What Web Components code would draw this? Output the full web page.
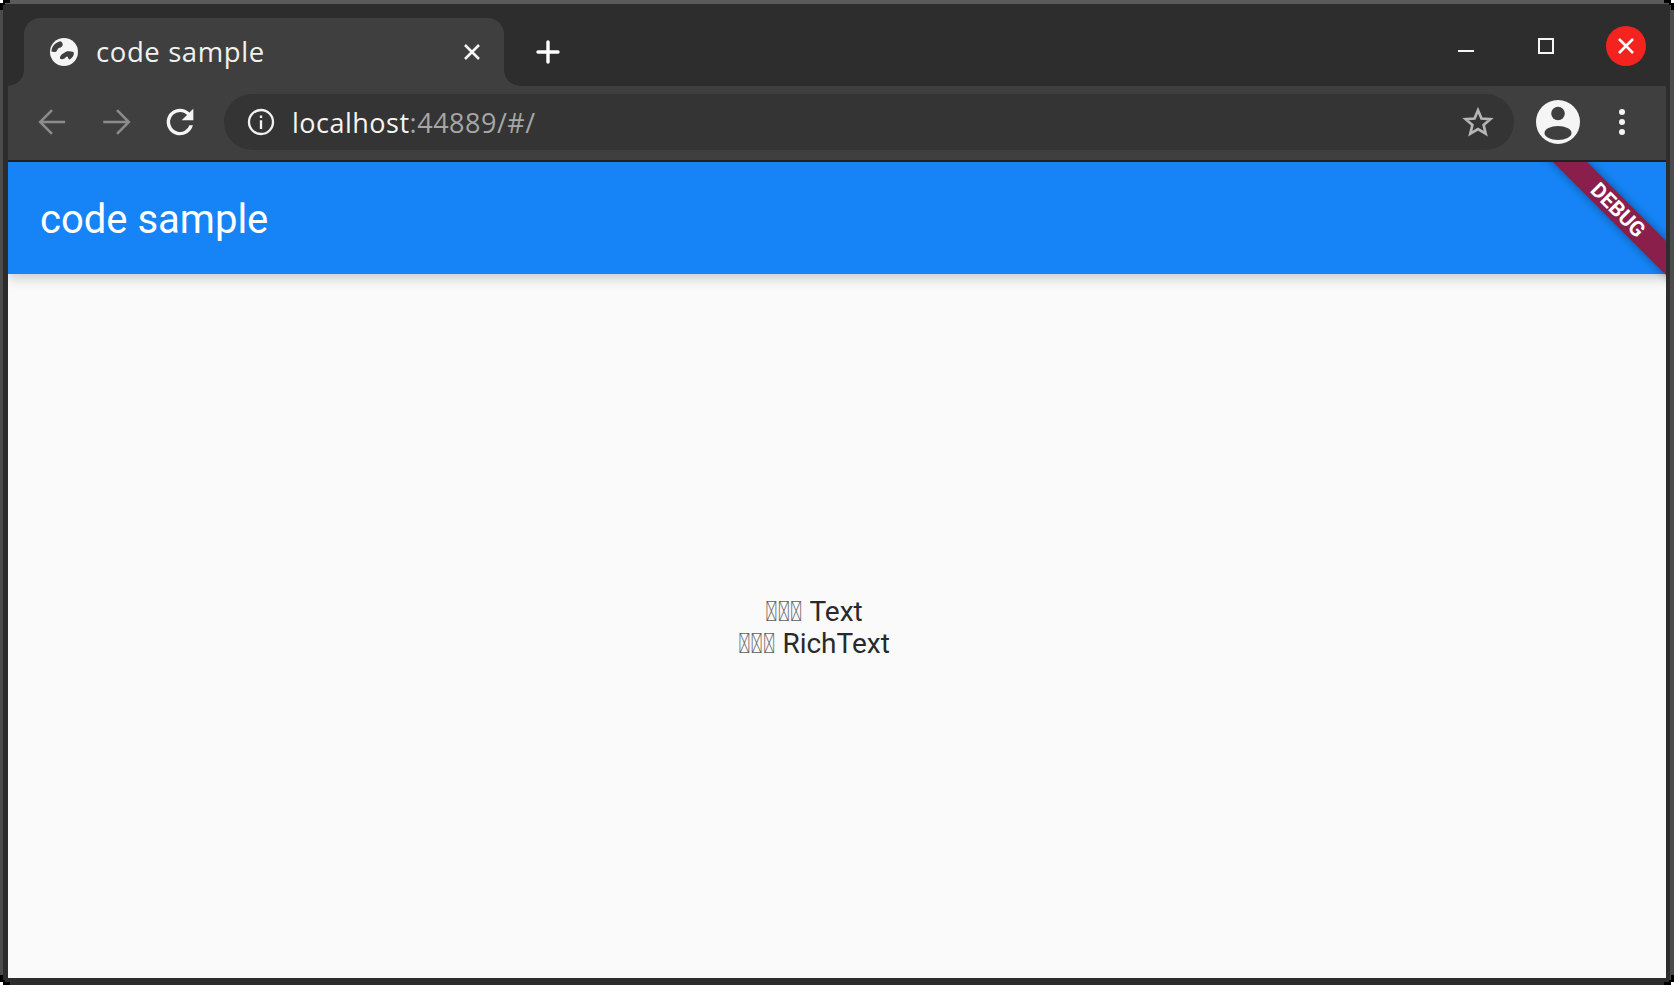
<!DOCTYPE html>
<html>
<head>
<meta charset="utf-8">
<title>code sample</title>
<style>
  html, body { margin: 0; padding: 0; height: 100%; background: #fff; overflow: hidden; }
</style>
</head>
<body>
<browser-window>
  <browser-tabs slot="tabs" title-text="code sample"></browser-tabs>
  <browser-toolbar slot="toolbar"></browser-toolbar>
  <flutter-page page-title="code sample">
    <center-lines></center-lines>
  </flutter-page>
</browser-window>

<script>
class BrowserWindow extends HTMLElement {
    constructor() {
        super();
        this.attachShadow({ mode: 'open' });
    }

    connectedCallback() {
        this.shadowRoot.innerHTML = `
            <style>
                :host {
                    display: flex;
                    flex-direction: column;
                    width: 1674px;
                    height: 985px;
                    box-sizing: border-box;
                    position: relative;
                    background: #2d2d2d;
                    padding: 4px 8px 7px 8px;
                    box-shadow: inset 0 4px 0 #5a5a5a, inset 3px 0 0 #4c4c4c, inset -4px 0 0 #4c4c4c;
                }
                .corner { position: absolute; width: 10px; height: 10px; }
                .corner i { position: absolute; background: #000; }
                .tl { left: 0; top: 0; }
                .tr { right: 0; top: 0; transform: scaleX(-1); }
                .bl { left: 0; bottom: 0; transform: scaleY(-1); }
                .br { right: 0; bottom: 0; transform: scale(-1, -1); }
                .corner b { position: absolute; left: 0; top: 0; width: 3px; height: 3px; background: #fff; }
                .corner i.a { left: 0; top: 3px; width: 3px; height: 7px; }
                .corner i.b { left: 3px; top: 0; width: 7px; height: 3px; }
                .corner i.c { left: 3px; top: 3px; width: 2px; height: 2px; }
            </style>
            <slot name="tabs"></slot>
            <slot name="toolbar"></slot>
            <slot></slot>
            <div class="corner tl"><b></b><i class="a"></i><i class="b"></i><i class="c"></i></div>
            <div class="corner tr"><b></b><i class="a"></i><i class="b"></i><i class="c"></i></div>
            <div class="corner bl"><b></b><i class="a"></i><i class="b"></i><i class="c"></i></div>
            <div class="corner br"><b></b><i class="a"></i><i class="b"></i><i class="c"></i></div>
        `;
    }
}

class BrowserTabs extends HTMLElement {
    constructor() {
        super();
        this.attachShadow({ mode: 'open' });
    }

    connectedCallback() {
        const title = this.getAttribute('title-text') || '';
        this.shadowRoot.innerHTML = `
            <style>
                :host {
                    display: flex;
                    align-items: flex-end;
                    height: 82px;
                    flex: none;
                    color: #fff;
                    font-family: 'Open Sans', 'Noto Sans', sans-serif;
                }
                .tab {
                    position: relative;
                    display: flex;
                    align-items: center;
                    width: 480px;
                    height: 68px;
                    margin-left: 16px;
                    box-sizing: border-box;
                    padding: 0 23px 0 26px;
                    background: #3f3f3f;
                    border-radius: 16px 16px 0 0;
                }
                .tab::before, .tab::after {
                    content: '';
                    position: absolute;
                    bottom: 0;
                    width: 16px;
                    height: 16px;
                }
                .tab::before { left: -16px; background: radial-gradient(circle at 0 0, #2d2d2d 15.5px, #3f3f3f 16px); }
                .tab::after { right: -16px; background: radial-gradient(circle at 100% 0, #2d2d2d 15.5px, #3f3f3f 16px); }
                .title { flex: 1; margin-left: 18px; padding-bottom: 2px; font-size: 27.5px; font-weight: 400; color: #f1f1f1; letter-spacing: 0.6px; white-space: nowrap; }
                svg { display: block; flex: none; }
                .plus { margin: 0 0 22px 32px; }
                .spacer { flex: 1; }
                .controls { display: flex; align-items: center; margin: 22px 20px 0 0; height: 40px; align-self: flex-start; }
                .min { margin-right: 64px; }
                .max { margin-right: 52px; }
                .close { width: 40px; height: 40px; border-radius: 50%; background: #f4231f; display: flex; align-items: center; justify-content: center; }
            </style>
            <div class="tab">
                <svg width="28" height="28" viewBox="0 0 24 24"><circle cx="12" cy="12" r="12" fill="#f5f5f5"/><path fill="#3f3f3f" d="M1.200 11.600C1.400 9.400 2 7.700 3.200 6.200 4.700 4.500 6.800 3.300 9.200 2.800c1 .7 1.900 1.700 1.700 2.900-.2 1.200-1 2-1.900 2.400-.9.300-1.900.5-2.300 1.200-.4.800-.6 1.800-1.500 2.400-1.200.4-2.800.3-4-.1z"/><path fill="#3f3f3f" d="M8.600 17.800c-.2-1.300.3-2.700 1.400-3.600 1.100-1 2.300-1.400 3.600-2.400 1.900-.6 4.300-.4 6.500.2.700 1.500.3 3.300-1.200 4.700-.8.800-1.500 1.500-2.300 1.700-.9-.5-1-1.800-1.800-2.600-.9.200-1.600 1-2.400 1.800-1.100.6-2.500.7-3.800.2z"/></svg>
                <span class="title">${title}</span>
                <svg width="18" height="18" viewBox="0 0 18 18"><path stroke="#f5f5f5" stroke-width="2.600" d="M2 2l14 14M16 2L2 16"/></svg>
            </div>
            <svg class="plus" width="24" height="24" viewBox="0 0 24 24"><path stroke="#fff" stroke-width="3.400" stroke-linecap="round" d="M12 2v20M2 12h20"/></svg>
            <div class="spacer"></div>
            <div class="controls">
                <svg class="min" width="16" height="16" viewBox="0 0 16 16"><rect y="12" width="16" height="2" fill="#f5f5f5"/></svg>
                <svg class="max" width="16" height="16" viewBox="0 0 16 16"><rect x="1" y="1" width="14" height="14" fill="none" stroke="#f5f5f5" stroke-width="2"/></svg>
                <div class="close"><svg width="18" height="18" viewBox="0 0 18 18"><path stroke="#fff" stroke-width="2.600" d="M2 2l14 14M16 2L2 16"/></svg></div>
            </div>
        `;
    }
}

class BrowserToolbar extends HTMLElement {
    constructor() {
        super();
        this.attachShadow({ mode: 'open' });
    }

    connectedCallback() {
        this.shadowRoot.innerHTML = `
            <style>
                :host {
                    display: flex;
                    align-items: center;
                    height: 74px;
                    flex: none;
                    box-sizing: border-box;
                    background: #3f3f3f;
                    padding: 0 0 2px 29px;
                    font-family: 'Open Sans', 'Noto Sans', sans-serif;
                }
                svg { display: block; flex: none; }
                .fwd { margin-left: 35px; }
                .reload { margin-left: 28px; }
                .omni {
                    display: flex;
                    align-items: center;
                    width: 1290px;
                    height: 56px;
                    margin-left: 24px;
                    box-sizing: border-box;
                    padding: 0 20px 0 23px;
                    border-radius: 28px;
                    background: #343434;
                    font-size: 27px;
                    letter-spacing: 0.5px;
                    white-space: nowrap;
                }
                .url { flex: 1; margin-left: 17px; color: #f5f5f5; }
                .url span { color: #a6a6a6; }
                .avatar { margin-left: 22px; }
                .menu { margin-left: 38px; }
            </style>
            <svg width="30" height="30" viewBox="0 0 24 24"><path fill="none" stroke="#8c8c8c" stroke-width="2" d="M22.500 12H2.500M12 2.500L2.500 12l9.500 9.500"/></svg>
            <svg class="fwd" width="30" height="30" viewBox="0 0 24 24"><path fill="none" stroke="#8c8c8c" stroke-width="2" d="M1 12h20.500M12 2.500l9.500 9.500L12 21.500"/></svg>
            <svg class="reload" width="40" height="40" viewBox="0 0 24 24"><path fill="#f5f5f5" d="M17.650 6.350A7.960 7.960 0 0 0 12 4a8 8 0 1 0 7.730 10h-2.080A6 6 0 1 1 12 6c1.660 0 3.140.69 4.220 1.780L13 11h7V4l-2.350 2.350z"/></svg>
            <div class="omni">
                <svg width="28" height="28" viewBox="0 0 24 24"><circle cx="12" cy="12" r="10.300" fill="none" stroke="#f1f1f1" stroke-width="2"/><path fill="#f1f1f1" d="M11 10.500h2V18h-2zM11 6.500h2v2h-2z"/></svg>
                <div class="url">localhost<span>:44889/#/</span></div>
                <svg width="32" height="32" viewBox="0 0 24 24"><path fill="none" stroke="#b5b5b5" stroke-width="2" d="M12 3.200l2.600 6.200 6.700.5-5.100 4.400 1.600 6.500L12 17.300l-5.800 3.500 1.600-6.500-5.100-4.400 6.700-.5z"/></svg>
            </div>
            <svg class="avatar" width="44" height="44" viewBox="0 0 44 44"><circle cx="22" cy="22" r="22" fill="#f5f5f5"/><circle cx="22" cy="13.500" r="6.800" fill="#3f3f3f"/><ellipse cx="22" cy="33" rx="13.500" ry="7" fill="#3f3f3f"/></svg>
            <svg class="menu" width="8" height="28" viewBox="0 0 8 28"><circle cx="4" cy="4" r="3" fill="#f5f5f5"/><circle cx="4" cy="14" r="3" fill="#f5f5f5"/><circle cx="4" cy="24" r="3" fill="#f5f5f5"/></svg>
        `;
    }
}

class FlutterPage extends HTMLElement {
    constructor() {
        super();
        this.attachShadow({ mode: 'open' });
    }

    connectedCallback() {
        const title = this.getAttribute('page-title') || '';
        this.shadowRoot.innerHTML = `
            <style>
                :host {
                    display: flex;
                    flex-direction: column;
                    flex: 1;
                    min-height: 0;
                    position: relative;
                    overflow: hidden;
                    background: #fafafa;
                    border-top: 2px solid #202020;
                    font-family: Roboto, 'Liberation Sans', sans-serif;
                }
                header {
                    display: flex;
                    align-items: center;
                    height: 112px;
                    flex: none;
                    box-sizing: border-box;
                    padding: 2px 0 0 32px;
                    background: #1684f6;
                    color: #fff;
                    font-size: 40px;
                    box-shadow: 0 4px 12px rgba(0, 0, 0, 0.2);
                    position: relative;
                    z-index: 1;
                }
                main {
                    flex: 1;
                    display: flex;
                    align-items: center;
                    justify-content: center;
                    padding: 4px 46px 0 0;
                }
                .ribbon {
                    position: absolute;
                    z-index: 2;
                    top: 36px;
                    right: -47px;
                    width: 190px;
                    height: 24px;
                    line-height: 24px;
                    text-align: center;
                    background: #8a1f4c;
                    color: #fff;
                    font-size: 21px;
                    font-weight: 700;
                    transform: rotate(45deg);
                    box-shadow: 0 0 10px rgba(0, 0, 0, 0.4);
                }
            </style>
            <header>${title}</header>
            <main><slot></slot></main>
            <div class="ribbon">DEBUG</div>
        `;
    }
}

class CenterLines extends HTMLElement {
    constructor() {
        super();
        this.attachShadow({ mode: 'open' });
    }

    connectedCallback() {
        this.shadowRoot.innerHTML = `
            <style>
                :host {
                    display: block;
                    text-align: center;
                    color: #2a2a2a;
                    font-family: Roboto, sans-serif;
                    font-size: 28px;
                    line-height: 32px;
                }
                span { color: #616161; }
            </style>
            <div><span>\uE000\uE001\uE002</span> Text</div>
            <div><span>\uE000\uE001\uE002</span> RichText</div>
        `;
    }
}

customElements.define('browser-window', BrowserWindow);
customElements.define('browser-tabs', BrowserTabs);
customElements.define('browser-toolbar', BrowserToolbar);
customElements.define('flutter-page', FlutterPage);
customElements.define('center-lines', CenterLines);
</script>
</body>
</html>
